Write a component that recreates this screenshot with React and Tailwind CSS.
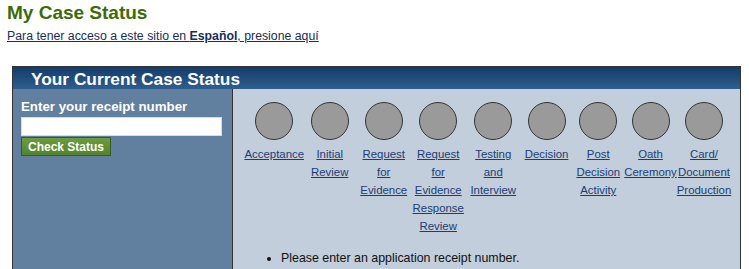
import React from "react";

const steps = [
  { w: "w-[56.5px]", words: ["Acceptance"] },
  { w: "w-[54.5px]", words: ["Initial", "Review"] },
  { w: "w-[53.5px]", words: ["Request", "for", "Evidence"] },
  { w: "w-[55.5px]", words: ["Request", "for", "Evidence", "Response", "Review"] },
  { w: "w-[54.5px]", words: ["Testing", "and", "Interview"] },
  { w: "w-[52px]", words: ["Decision"] },
  { w: "w-[51.5px]", words: ["Post", "Decision", "Activity"] },
  { w: "w-[53px]", words: ["Oath", "Ceremony"] },
  { w: "w-[54px]", words: ["Card/", "Document", "Production"] },
];

function Step({ w, words }) {
  return (
    <div className={`${w} shrink-0 flex flex-col items-center text-center`}>
      <div className="w-[38px] h-[38px] rounded-full bg-[#9a9a9a] border-[1.5px] border-[#353535]" />
      <a href="#" className="mt-[5px] whitespace-nowrap text-[11.4px] leading-[18px] text-[#1c3d74] underline">
        {words.map((t, i) => (
          <span key={i} className="block">{t}</span>
        ))}
      </a>
    </div>
  );
}

export default function App() {
  return (
    <div className="w-[749px] h-[269px] overflow-hidden bg-white font-['Liberation_Sans',Arial,sans-serif]">
      <h1 className="pl-[7px] pt-[3px] text-[19px] leading-[19px] font-bold text-[#3a6c0a]">My Case Status</h1>
      <a href="#" className="block mt-[5px] ml-[7px] w-fit text-[12.3px] leading-[18px] text-[#1a2d5c] underline">
        Para tener acceso a este sitio en <b>Español</b>, presione aquí
      </a>

      <div className="ml-[12px] mt-[21px] w-[729px] border border-[#333]">
        <div className="h-[22px] pl-[18px] pt-[1px] bg-linear-to-b from-[#123c6b] to-[#2f5e8f] text-white text-[17.3px] leading-[22px] font-bold">
          Your Current Case Status
        </div>
        <div className="flex min-h-[220px]">
          <div className="w-[220px] shrink-0 bg-[#617f9e] border-r border-[#333] pl-[8px] pt-[10px]">
            <div className="text-[13.3px] leading-[16px] font-bold text-white">Enter your receipt number</div>
            <input
              type="text"
              className="block mt-[2px] w-[201px] h-[19px] bg-white border border-[#d5dce4] outline-none"
            />
            <button className="block mt-[1px] w-[90px] h-[19px] bg-linear-to-b from-[#6c9c3d] to-[#54842a] border border-[#3a5a22] text-white text-[12px] leading-[16px] font-bold">
              Check Status
            </button>
          </div>
          <div className="flex-1 bg-[#c2cedb]">
            <div className="flex pt-[13px] pl-[13px]">
              {steps.map((s, i) => (
                <Step key={i} w={s.w} words={s.words} />
              ))}
            </div>
            <ul className="list-disc mt-[15px] pl-[48px] text-[12.4px] leading-[16px] text-[#111]">
              <li>Please enter an application receipt number.</li>
            </ul>
          </div>
        </div>
      </div>
    </div>
  );
}
